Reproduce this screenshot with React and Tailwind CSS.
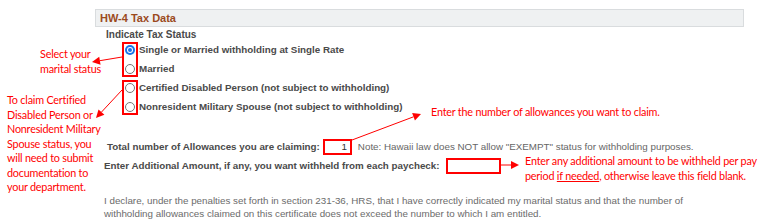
const arial = { fontFamily: '"Liberation Sans", Arial, sans-serif' };
const note = { fontFamily: 'Lato, "Open Sans", sans-serif' };

function Radio({ checked }) {
  return checked ? (
    <span className="w-[10px] h-[10px] rounded-full bg-[#1a73e8] flex items-center justify-center">
      <span className="w-[6px] h-[6px] rounded-full bg-white flex items-center justify-center">
        <span className="w-[4px] h-[4px] rounded-full bg-[#1a73e8]" />
      </span>
    </span>
  ) : (
    <span className="w-[10px] h-[10px] rounded-full border border-[#767676] bg-white" />
  );
}

function RadioGroup({ options }) {
  return (
    <div className="flex ml-[27px]">
      <div className="border-2 border-[#f00] p-[1px] flex flex-col gap-[9px] w-[16px] items-center">
        {options.map((o) => (
          <Radio key={o.label} checked={o.checked} />
        ))}
      </div>
      <div className="flex flex-col gap-[9px] pt-[3px] pl-[1px]">
        {options.map((o) => (
          <div key={o.label} className="h-[10px] flex items-center text-[9.8px] font-bold text-[#4a4a4a] whitespace-nowrap">
            {o.label}
          </div>
        ))}
      </div>
    </div>
  );
}

function Arrow({ x1, y1, x2, y2 }) {
  const dx = x2 - x1;
  const dy = y2 - y1;
  const len = Math.hypot(dx, dy);
  const ux = dx / len;
  const uy = dy / len;
  const bx = x2 - ux * 8;
  const by = y2 - uy * 8;
  const px = -uy * 4;
  const py = ux * 4;
  return (
    <g>
      <line x1={x1} y1={y1} x2={bx} y2={by} stroke="#f00" strokeWidth="1" />
      <polygon points={`${x2},${y2} ${bx + px},${by + py} ${bx - px},${by - py}`} fill="#f00" />
    </g>
  );
}

export default function App() {
  return (
    <div className="relative w-[768px] h-[224px] bg-white overflow-hidden" style={arial}>
      {/* Form */}
      <div className="pl-[95px] pr-[24px] pt-[9px]">
        <div className="h-[18px] border border-[#d9dcde] bg-[#eff1f2] flex items-center pl-[4px] text-[11px] font-bold text-[#9b4a1c]">
          HW-4 Tax Data
        </div>
        <div className="mt-[2px] pl-[11px] text-[10px] leading-[12px] font-bold text-[#4a4a4a]">
          Indicate Tax Status
        </div>
        <div className="mt-[1px] flex flex-col gap-[3px]">
          <RadioGroup
            options={[
              { label: "Single or Married withholding at Single Rate", checked: true },
              { label: "Married" },
            ]}
          />
          <RadioGroup
            options={[
              { label: "Certified Disabled Person (not subject to withholding)" },
              { label: "Nonresident Military Spouse (not subject to withholding)" },
            ]}
          />
        </div>

        <div className="mt-[24px] flex items-center h-[16px] pl-[12px] text-[9.8px]">
          <span className="font-bold text-[#4a4a4a] whitespace-nowrap">
            Total number of Allowances you are claiming:
          </span>
          <span className="ml-[3px] w-[29px] h-[16px] border-2 border-[#f00] flex items-center justify-end pr-[3px] text-[#333]">
            1
          </span>
          <span className="ml-[6px] text-[#666] whitespace-nowrap">
            Note: Hawaii law does NOT allow "EXEMPT" status for withholding purposes.
          </span>
        </div>

        <div className="mt-[3px] flex items-center h-[16px] pl-[9px] text-[9.8px]">
          <span className="font-bold text-[#4a4a4a] whitespace-nowrap">
            Enter Additional Amount, if any, you want withheld from each paycheck:
          </span>
          <span className="ml-[6px] w-[55px] h-[16px] border-2 border-[#f00]" />
        </div>

        <p className="mt-[21px] pl-[9px] w-[620px] text-[9.8px] leading-[12.5px] text-[#6b6b6b]">
          I declare, under the penalties set forth in section 231-36, HRS, that I have correctly indicated my marital status and that the number of
          <br />
          withholding allowances claimed on this certificate does not exceed the number to which I am entitled.
        </p>
      </div>

      {/* Callouts */}
      <div className="absolute left-[40px] top-[46px] text-[10.8px] tracking-[-0.2px] leading-[15px] text-[#f00]" style={note}>
        Select your
        <br />
        marital status
      </div>
      <div className="absolute left-[7px] top-[93px] text-[10.8px] tracking-[-0.2px] leading-[14.5px] text-[#f00]" style={note}>
        To claim Certified
        <br />
        Disabled Person or
        <br />
        Nonresident Military
        <br />
        Spouse status, you
        <br />
        will need to submit
        <br />
        documentation to
        <br />
        your department.
      </div>
      <div className="absolute left-[431px] top-[104px] text-[10.8px] tracking-[-0.2px] leading-[15px] text-[#f00] whitespace-nowrap" style={note}>
        Enter the number of allowances you want to claim.
      </div>
      <div className="absolute left-[525px] top-[153px] text-[10.8px] tracking-[-0.2px] leading-[15px] text-[#f00] whitespace-nowrap" style={note}>
        Enter any additional amount to be withheld per pay
        <br />
        period <span className="underline decoration-[#f00]">if needed</span>, otherwise leave this field blank.
      </div>

      <svg className="absolute inset-0 pointer-events-none" width="768" height="224">
        <Arrow x1={122} y1={57} x2={92} y2={62} />
        <Arrow x1={122} y1={90} x2={96} y2={118} />
        <Arrow x1={352} y1={140} x2={421} y2={114} />
        <Arrow x1={501} y1={165} x2={519} y2={165} />
      </svg>
    </div>
  );
}
